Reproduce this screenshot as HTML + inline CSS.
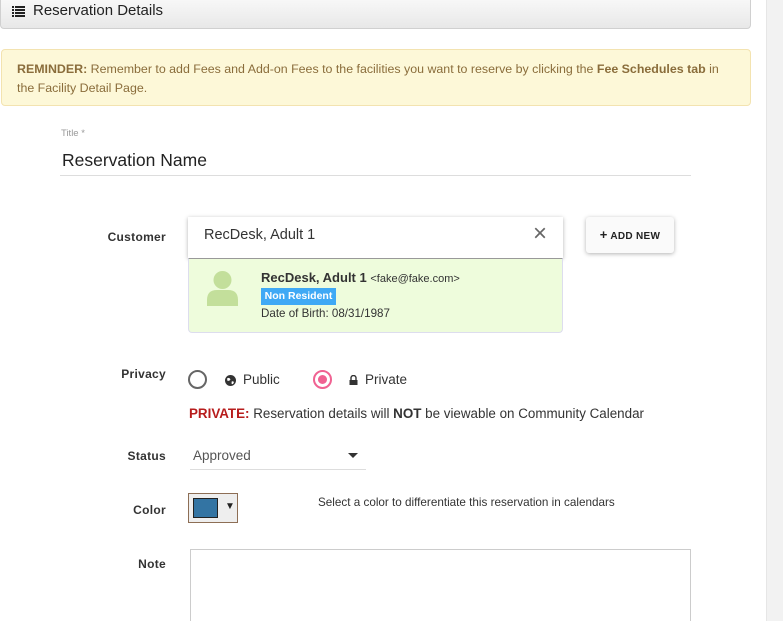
<!DOCTYPE html>
<html><head><meta charset="utf-8"><style>
*{box-sizing:border-box;margin:0;padding:0}
html,body{width:783px;height:621px;overflow:hidden}
body{background:#fff;font-family:"Liberation Sans",sans-serif;position:relative;color:#333}
.abs{position:absolute;white-space:nowrap}
.lbl{position:absolute;font-weight:bold;font-size:12px;color:#333;text-align:right;width:80px;letter-spacing:.3px}
</style></head><body>
<div class="abs" style="left:766px;top:0;width:17px;height:621px;background:#f2f2f2;border-left:1px solid #e6e6e6"></div>
<div class="abs" style="left:0;top:-6px;width:751px;height:35px;background:linear-gradient(#fafafa,#e8e8e8);border:1px solid #d0d0d0;border-radius:0 0 4px 4px"></div>
<svg class="abs" style="left:12px;top:6px" width="13" height="11" viewBox="0 0 13 11"><g fill="#222"><rect x="0" y="0" width="2" height="2"/><rect x="3" y="0" width="10" height="2"/><rect x="0" y="3" width="2" height="2"/><rect x="3" y="3" width="10" height="2"/><rect x="0" y="6" width="2" height="2"/><rect x="3" y="6" width="10" height="2"/><rect x="0" y="9" width="2" height="2"/><rect x="3" y="9" width="10" height="2"/></g></svg>
<div class="abs" style="left:33px;top:2px;font-size:15px;color:#222">Reservation Details</div>
<div class="abs" style="left:1px;top:49px;width:750px;height:57px;background:#fdf8d8;border:1px solid #f3e3b0;border-radius:4px;padding:10px 15px;font-size:12.4px;line-height:19px;color:#8a6d3b">
<b>REMINDER:</b> Remember to add Fees and Add-on Fees to the facilities you want to reserve by clicking the <b>Fee Schedules tab</b> in<br>the Facility Detail Page.</div>
<div class="abs" style="left:61px;top:128px;font-size:9.5px;color:#999">Title *</div>
<div class="abs" style="left:62px;top:150px;font-size:17.5px;color:#222">Reservation Name</div>
<div class="abs" style="left:60px;top:175px;width:631px;height:1px;background:#ddd"></div>

<div class="lbl" style="left:86px;top:230px">Customer</div>
<div class="abs" style="left:188px;top:217px;width:375px;height:41px;background:#fff;box-shadow:0 1px 4px rgba(0,0,0,.3)"></div>
<div class="abs" style="left:204px;top:227px;font-size:14.5px;color:#333">RecDesk, Adult 1</div>
<div class="abs" style="left:533px;top:222px;font-size:24px;line-height:24px;color:#666">×</div>
<div class="abs" style="left:188px;top:258px;width:375px;height:75px;background:#eefcdc;border:1px solid #dde;border-top:1px solid #999;border-radius:0 0 4px 4px"></div>
<svg class="abs" style="left:207px;top:270px" width="31" height="36" viewBox="0 0 31 36"><circle cx="15.5" cy="10" r="9" fill="#c3df9b"/><path d="M0 36 V30 Q0 20 10 20 H21 Q31 20 31 30 V36Z" fill="#c3df9b"/></svg>
<div class="abs" style="left:261px;top:270px;font-size:13px;color:#333"><b>RecDesk, Adult 1</b> <span style="font-size:11px">&lt;fake@fake.com&gt;</span></div>
<div class="abs" style="left:261px;top:288px;width:75px;height:17px;background:#3fa9f5;color:#fff;font-size:10.5px;font-weight:bold;text-align:center;line-height:17px">Non Resident</div>
<div class="abs" style="left:261px;top:307px;font-size:11.6px;color:#333">Date of Birth: 08/31/1987</div>
<div class="abs" style="left:586px;top:217px;width:88px;height:36px;background:#fafafa;border-radius:3px;box-shadow:0 1px 4px rgba(0,0,0,.3);font-size:10px;font-weight:bold;color:#222;text-align:center;line-height:36px;letter-spacing:.3px"><span style="font-size:13px">+</span> ADD NEW</div>

<div class="lbl" style="left:86px;top:367px">Privacy</div>
<div class="abs" style="left:188px;top:370px;width:19px;height:19px;border:2px solid #666;border-radius:50%"></div>
<svg class="abs" style="left:225px;top:375px" width="11" height="11" viewBox="0 0 10 10"><circle cx="5" cy="5" r="5" fill="#333"/><path d="M2 3 Q4 2 5 4 Q4 6 2 5Z M6 6 Q8 5 8 7 Q7 9 6 8Z" fill="#fff"/></svg>
<div class="abs" style="left:243px;top:372px;font-size:13.5px;color:#333">Public</div>
<div class="abs" style="left:313px;top:370px;width:19px;height:19px;border:2px solid #f06292;border-radius:50%"><div style="margin:3px;width:9px;height:9px;border-radius:50%;background:#f06292"></div></div>
<svg class="abs" style="left:349px;top:375px" width="9" height="10" viewBox="0 0 9 10"><path d="M2 5V3a2.5 2.5 0 015 0v2" stroke="#333" stroke-width="1.4" fill="none"/><rect x="0.5" y="5" width="8" height="5" fill="#333"/></svg>
<div class="abs" style="left:365px;top:372px;font-size:13.5px;color:#333">Private</div>
<div class="abs" style="left:189px;top:406px;font-size:13.4px;color:#333"><b style="color:#b71c1c">PRIVATE:</b> Reservation details will <b>NOT</b> be viewable on Community Calendar</div>

<div class="lbl" style="left:86px;top:449px">Status</div>
<div class="abs" style="left:193px;top:448px;font-size:13.5px;color:#555">Approved</div>
<div class="abs" style="left:348px;top:453px;width:0;height:0;border-left:5px solid transparent;border-right:5px solid transparent;border-top:5px solid #333"></div>
<div class="abs" style="left:190px;top:469px;width:176px;height:1px;background:#ddd"></div>

<div class="lbl" style="left:86px;top:503px">Color</div>
<div class="abs" style="left:188px;top:493px;width:50px;height:30px;background:#eee;border:1px solid #8d6e55"></div>
<div class="abs" style="left:193px;top:498px;width:25px;height:20px;background:#3374a3;border:1px solid #222"></div>
<div class="abs" style="left:225px;top:501px;font-size:10px;color:#222">▼</div>
<div class="abs" style="left:318px;top:496px;font-size:11.7px;color:#333">Select a color to differentiate this reservation in calendars</div>

<div class="lbl" style="left:86px;top:557px">Note</div>
<div class="abs" style="left:190px;top:549px;width:501px;height:90px;border:1px solid #ccc"></div>
</body></html>
